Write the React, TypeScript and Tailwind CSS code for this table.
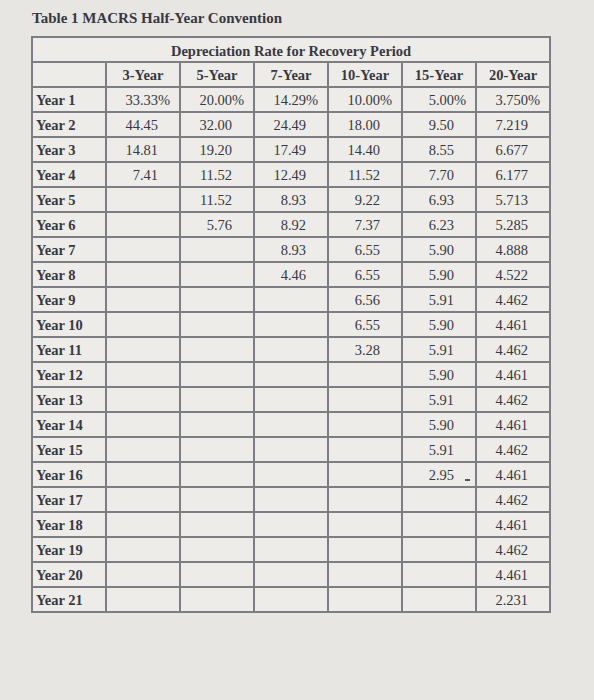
const periods = ["3-Year", "5-Year", "7-Year", "10-Year", "15-Year", "20-Year"]

// rates per recovery period, index = year - 1
const rates: string[][] = [
  ["33.33%", "44.45", "14.81", "7.41"],
  ["20.00%", "32.00", "19.20", "11.52", "11.52", "5.76"],
  ["14.29%", "24.49", "17.49", "12.49", "8.93", "8.92", "8.93", "4.46"],
  ["10.00%", "18.00", "14.40", "11.52", "9.22", "7.37", "6.55", "6.55", "6.56", "6.55", "3.28"],
  ["5.00%", "9.50", "8.55", "7.70", "6.93", "6.23", "5.90", "5.90", "5.91", "5.90", "5.91", "5.90", "5.91", "5.90", "5.91", "2.95"],
  [
    "3.750%", "7.219", "6.677", "6.177", "5.713", "5.285", "4.888", "4.522", "4.462", "4.461", "4.462",
    "4.461", "4.462", "4.461", "4.462", "4.461", "4.462", "4.461", "4.462", "4.461", "2.231",
  ],
]

const years = Array.from({ length: 21 }, (_, i) => i + 1)

function Rate({ value }: { value?: string }) {
  if (!value) return null
  const pct = value.endsWith("%")
  const num = pct ? value.slice(0, -1) : value
  return (
    <div className="flex justify-end">
      <span>{num}</span>
      <span className="inline-block w-[12px] text-left">{pct ? "%" : ""}</span>
    </div>
  )
}

export default function App() {
  return (
    <div
      className="w-[594px] h-[700px] bg-[#e7e6e2] text-[#383842] pt-[10px] pl-[31px]"
      style={{ fontFamily: '"Liberation Serif", "Times New Roman", serif' }}
    >
      <h1 className="text-[15px] font-bold leading-[16px] ml-[1px] mb-[10px]">Table 1 MACRS Half-Year Convention</h1>

      <table className="border-collapse table-fixed w-[520px] text-[14.5px] leading-[16px] bg-[#edece9]">
        <colgroup>
          <col className="w-[74px]" />
          {periods.map((p) => (
            <col key={p} className="w-[74px]" />
          ))}
        </colgroup>
        <thead>
          <tr className="h-[25px]">
            <th colSpan={7} className="border-2 border-[#7d7d84] font-bold text-center pt-[2px]">
              Depreciation Rate for Recovery Period
            </th>
          </tr>
          <tr className="h-[25px]">
            <th className="border-2 border-[#7d7d84]" />
            {periods.map((p) => (
              <th key={p} className="border-2 border-[#7d7d84] font-bold text-center">
                {p}
              </th>
            ))}
          </tr>
        </thead>
        <tbody>
          {years.map((y) => (
            <tr key={y} className="h-[25px]">
              <td className="border-2 border-[#7d7d84] font-bold pl-[3px]">Year {y}</td>
              {rates.map((col, i) => (
                <td key={i} className="relative border-2 border-[#7d7d84] pr-[9px]">
                  <Rate value={col[y - 1]} />
                  {i === 4 && y === 16 && (
                    <span className="absolute right-[5px] top-[16px] w-[5px] h-[2px] bg-[#55555e]" />
                  )}
                </td>
              ))}
            </tr>
          ))}
        </tbody>
      </table>
    </div>
  )
}
